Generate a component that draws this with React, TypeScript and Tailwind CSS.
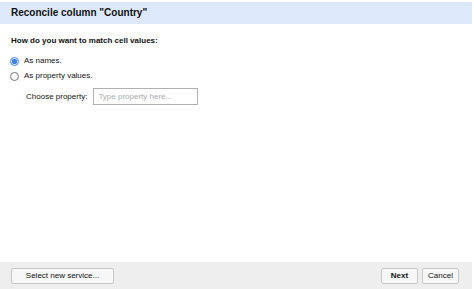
import React from "react";

export default function App() {
  return (
    <div className="w-[474px] h-[289px] bg-white flex flex-col" style={{ fontFamily: "Arial, 'Liberation Sans', sans-serif" }}>
      <div className="w-[472px] mt-[2px] h-[22px] bg-[#dde9fb] flex items-center pl-[11px]">
        <span className="text-[10px] font-bold text-[#111] leading-none">Reconcile column "Country"</span>
      </div>
      <div className="flex-1 flex flex-col pl-[11px] pt-[12px]">
        <div className="text-[8px] font-bold text-[#111] leading-[10px]">How do you want to match cell values:</div>
        <div className="flex items-center mt-[10px] h-[10px] text-[8px] text-[#111]">
          <input type="radio" name="m" defaultChecked className="w-[9px] h-[9px] m-0 ml-[-1px] mr-[5px] accent-[#3b82f6]" />
          <span>As names.</span>
        </div>
        <div className="flex items-center mt-[5px] h-[10px] text-[8px] text-[#111]">
          <input type="radio" name="m" className="w-[9px] h-[9px] m-0 ml-[-1px] mr-[5px]" />
          <span>As property values.</span>
        </div>
        <div className="flex items-center mt-[7px] pl-[15px] text-[8px] text-[#111]">
          <span>Choose property:</span>
          <input
            placeholder="Type property here..."
            className="ml-[6px] w-[105px] h-[17px] border border-[#b0b0b0] px-[4px] text-[8px] placeholder:text-[#aaa] outline-none"
          />
        </div>
      </div>
      <div className="w-[472px] h-[27px] bg-[#eeeeee] flex items-center px-[11px]">
        <button className="h-[16px] w-[103px] border border-[#c8c8c8] bg-[#f7f7f7] text-[8px] text-[#111] rounded-[2px] leading-none">Select new service...</button>
        <div className="flex-1" />
        <button className="h-[16px] w-[37px] border border-[#c8c8c8] bg-[#f7f7f7] text-[8px] font-bold text-[#111] rounded-[2px] leading-none">Next</button>
        <button className="ml-[4px] h-[16px] w-[37px] border border-[#c8c8c8] bg-[#f7f7f7] text-[8px] text-[#111] rounded-[2px] leading-none">Cancel</button>
        <div className="w-[2px]" />
      </div>
    </div>
  );
}
